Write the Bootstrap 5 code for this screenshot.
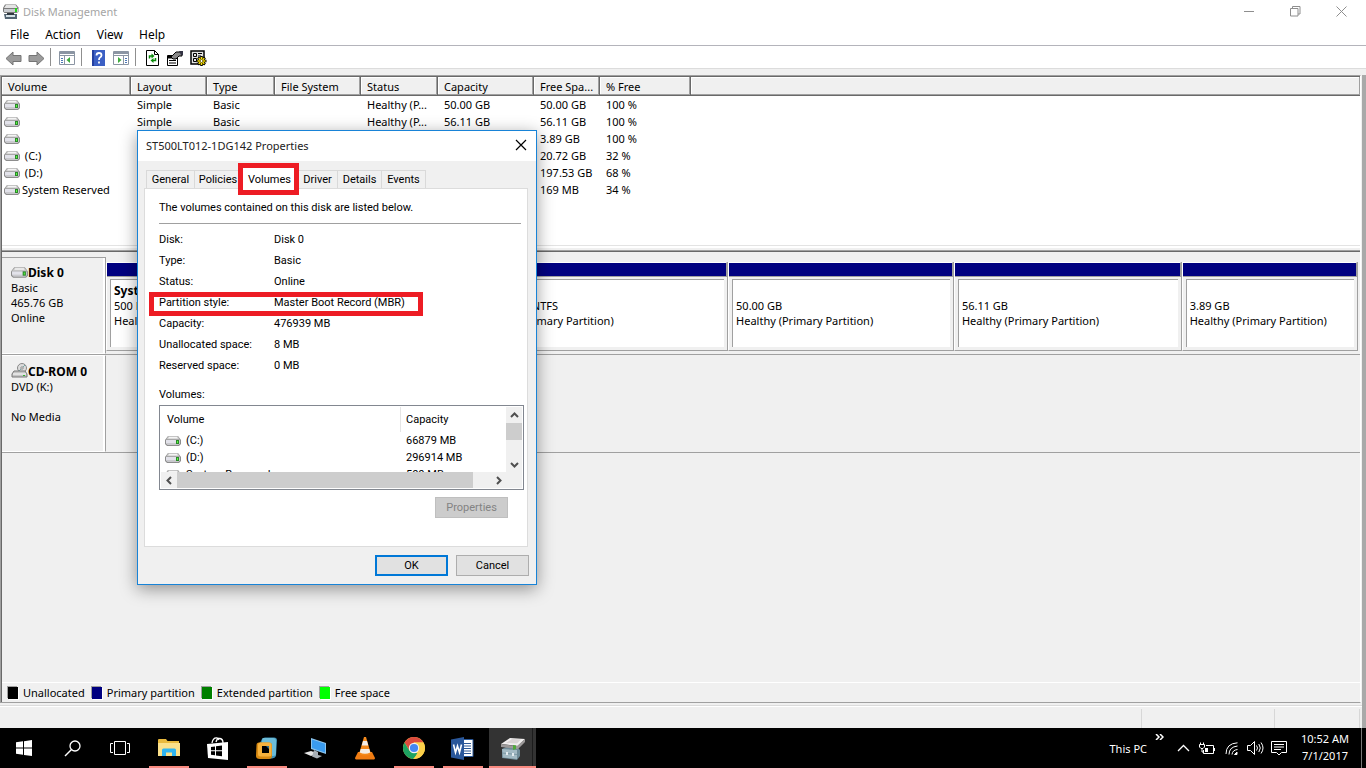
<!DOCTYPE html>
<html lang="en">
<head>
<meta charset="utf-8">
<meta name="viewport" content="width=device-width, initial-scale=1">
<title>Disk Management</title>
<link rel="stylesheet" href="https://cdn.jsdelivr.net/npm/bootstrap@5.3.0/dist/css/bootstrap.min.css">
<style>
body{font:11px/15px "Noto Sans","Open Sans",sans-serif;color:#000;background:#fff;min-height:100vh}
svg{display:block;flex:none}
button{font:inherit;padding:0;border:0;background:none;color:inherit}
.titlebar{height:23px;padding-left:3px;color:#a5a5a5}
.caption{margin-right:2px}
.caption button{width:46px;height:21px;color:#8e8e8e;display:grid;place-items:center}
.menus{height:23px;border-bottom:1px solid #b4b4bb;font-size:12px;padding-left:2px}
.menus button{padding:0 8px}
.tools{height:23px;border-bottom:1px solid #dcdcdc;padding:2px 4px 0}
.tools button{width:18px;height:18px;display:grid;place-items:center;margin-right:5px}
.tools .vr{background:#8f8f8f;opacity:1;height:18px;margin-right:7px}
.gutter{height:6px;background:#f0f0f0}
.client{background:#f0f0f0;border-right:4px solid #a9a9a9}
.frame{border-left:1px solid #a0a0a0;border-top:1px solid #a0a0a0;border-bottom:1px solid #a0a0a0;box-shadow:inset 1px 1px #696969;padding:1px 0 0 1px;margin-right:1px;border-right:1px solid #fff}
.listpane{background:#fff;min-height:168px}
.vols{width:100%;table-layout:fixed;border-collapse:separate;border-spacing:0}
.vols th{height:19px;font-weight:400;background:#f0f0f0;padding:2px 0 1px 6px;border-right:1px solid #696969;border-bottom:1px solid #696969;box-shadow:inset -1px -1px #a0a0a0,inset 1px 1px #fff;white-space:nowrap;overflow:hidden}
.vols th:last-child{border-right:0}
.vols td{height:17px;padding:0 0 0 6px;line-height:17px;white-space:nowrap;overflow:hidden;text-overflow:ellipsis}
.vols td:first-child{padding-left:2px}
.vols svg{margin-right:2px}
.splitter{height:7px;background:#f0f0f0;border-top:1px solid #e3e3e3;border-bottom:1px solid #696969;box-shadow:inset 0 -1px #a0a0a0,inset 0 2px #fff}
.disks{padding-top:5px}
.diskrow{min-height:98px;border-bottom:1px solid #a0a0a0}
.disklabel{width:104px;flex:none;padding:7px 9px;border-right:1px solid #a0a0a0;border-top:1px solid #a0a0a0;border-bottom:1px solid #fff;box-shadow:inset -2px 0 #fff}
.diskrow + .diskrow .disklabel{border-top-color:#fff}
.disklabel strong,.part strong{font-size:12px}
.parts{min-width:0;margin-right:2px}
.part{border-left:1px solid #fff;border-right:1px solid #a0a0a0;border-bottom:1px solid #a0a0a0;min-width:0;margin:5px 0 3px}
.part .stripe{height:15px;background:#000080;border-top:1px solid #fff;border-bottom:1px solid #a0a0a0;border-right:1px solid #a0a0a0}
.part .inside{flex:1;margin:2px 3px 3px;padding:3px 0 0 3px;background:#fff;border-left:1px solid #a0a0a0;border-top:1px solid #a0a0a0;white-space:nowrap;overflow:hidden}
.legend{height:20px;border-top:1px solid #fff;padding-left:6px}
.swatch{width:10px;height:12px;margin-right:5px;box-shadow:-1px -1px #a0a0a0,1px 1px #fff}
.legend span{margin-right:7px}
.statusbar{height:23px;margin-top:2px;border-top:1px solid #dcdcdc;box-shadow:inset 0 1px #fff}
.statusbar div{border-right:1px solid #d7d7d7;margin-top:3px}
.s2{width:133px}.s3{width:85px;margin-right:2px}
/* properties window */
.props{position:absolute;left:137px;top:130px;width:400px;background:#f0f0f0;border:1px solid #1883d7;box-shadow:0 4px 16px rgba(0,0,0,.4);font-family:Roboto,sans-serif}
.props header{height:30px;background:#fff;padding:0 9px 2px 8px;font-family:"Noto Sans",sans-serif;color:#222}
.tabs{height:27px;padding-left:8px;position:relative;z-index:1}
.tabs button{height:18px;border:1px solid #d9d9d9;border-bottom:0;border-left:0}
.tabs button:first-child{border-left:1px solid #d9d9d9}
.tabs .current{height:21px;margin-bottom:-1px;background:#fff;position:relative;border-color:#fff}
.w49{width:49px}.w47{width:47px}.w56{width:56px}.w40{width:40px}.w44{width:44px}
.callout::after{content:"";position:absolute;border:5px solid #ed1c24;pointer-events:none}
.tabs .callout::after{inset:-6px -2px -6px -4px}
.sheet{margin:0 8px 0 6px;padding:11px 3px 28px 14px;background:#fff;border:1px solid #dcdcdc}
.intro{margin:0 3px 5px 0;padding-bottom:8px;border-bottom:1px solid #a0a0a0}
.facts{margin:0 0 11px;line-height:21px}
.facts dt{width:115px;font-weight:400}
.facts dd{margin:0}
.facts .callout{position:relative}
.facts .callout::after{left:-10px;top:0;width:274px;height:24px}
.listbox{border:1px solid #828790;padding:1px;margin-top:3px;display:grid;grid-template:65px 16px/1fr 16px;background:#fff}
.clip{overflow:hidden}
.clip table{width:100%;table-layout:fixed;border-collapse:separate;border-spacing:0}
.clip th{height:25px;font-weight:400;padding:0 0 0 6px;border-right:1px solid #e5e5e5}
.clip th:last-child{border:0;padding-left:5px}
.clip td{line-height:17px;padding:0 0 0 4px}
.clip td:last-child{padding-left:5px}
.clip svg{margin-right:5px}
.bar{background:#f0f0f0}
.bar button{width:16px;height:16px;display:grid;place-items:center;color:#505050}
.thumb{background:#cdcdcd}
.v .thumb{height:17px}.h .thumb{width:296px}
.sheetbuttons{margin:7px 16px 0 0}
.pbtn{width:73px;height:21px;background:#e1e1e1;border:1px solid #adadad}
.pbtn:disabled{background:#ccc;border-color:#bfbfbf;color:#838383}
.pbtn.default{border:2px solid #0078d7}
.dlgbuttons{padding:8px 7px}
/* taskbar */
.taskbar{height:40px;background:#000;color:#fff}
.taskbar .sys{width:48px}.taskbar .app{width:49px}
.taskbar .sys,.taskbar .app{height:40px;display:grid;place-items:center}
.run{background:linear-gradient(#f98a80,#f98a80) 50% 100%/40px 2px no-repeat}
.active-app{background:linear-gradient(#f98a80,#f98a80) 0 100%/100% 2px no-repeat,linear-gradient(90deg,#333 43px,#1c1c1c 43px,#1c1c1c 44px,#333 44px);background-clip:padding-box;border-left:2px solid #000}
.tray button{height:40px;width:24px;display:grid;place-items:center}
.tray .more{height:18px}
.clock{width:60px;line-height:17px;margin-right:6px;padding-bottom:2px}
.edge{width:5px;border-left:1px solid #777}
</style>
</head>
<body class="d-flex flex-column position-relative overflow-hidden">
<svg width="0" height="0" class="position-absolute" aria-hidden="true">
  <symbol id="vol" viewBox="0 0 16 10"><path d="M3 0h10l3 4v4l-2 2H2L0 8V4z" fill="#8d8d8d"/><path d="M3.500 0h9l2.500 3.500H1z" fill="#c4c4c4"/><path d="M4 1h8l1 1.500H3z" fill="#f4f4f4"/><path d="M1 4h14v3.500L13.500 9h-11L1 7.500z" fill="#c9c9cd"/><path d="M1 4h10v3H1z" fill="#e2e2ea"/><rect x="11" y="4" width="3" height="4" fill="#2a8a28"/><rect x="12" y="5" width="1" height="2" fill="#5cf545"/></symbol>
</svg>

<div class="titlebar d-flex align-items-center justify-content-between">
  <div class="d-flex align-items-center gap-1">
    <svg width="16" height="16" viewBox="0 0 16 16"><path d="M2 0.500h11l2.500 3V8l-2 1H1.500L0 7.500V4z" fill="#7a7a7a"/><path d="M3 1h9.500l2 3H1z" fill="#e4e4e4"/><rect x="1" y="5" width="14" height="3" fill="#c9ccd0"/><rect x="12" y="4" width="2" height="4" fill="#25d51b"/><path d="M1 10h13v5H2z" fill="#536472"/><path d="M3 11h9v2H3z" fill="#d4e0e6"/><path d="M4 9h7v2H4z" fill="#30383f"/></svg>
    <span>Disk Management</span>
  </div>
  <div class="caption d-flex">
    <button aria-label="Minimize"><svg width="11" height="11"><path d="M0 5.500h10" stroke="currentColor"/></svg></button>
    <button aria-label="Restore"><svg width="11" height="11" fill="none" stroke="currentColor"><path d="M.5 2.500h7.500v7.500H.500zM2.500 2.500V.500H10v7.500H8"/></svg></button>
    <button aria-label="Close"><svg width="11" height="11"><path d="M.5.500l10 10M10.500.500l-10 10" stroke="currentColor"/></svg></button>
  </div>
</div>
<nav class="menus d-flex align-items-center" aria-label="Menu">
  <button>File</button><button>Action</button><button>View</button><button>Help</button>
</nav>
<div class="tools d-flex align-items-center" role="toolbar" aria-label="Tools">
  <button aria-label="Back"><svg width="17" height="15"><path d="M1 7.500L8 1v3.500h8v6H8V14z" fill="#9b9b9b" stroke="#747474"/></svg></button>
  <button aria-label="Forward"><svg width="17" height="15"><path d="M16 7.500L9 1v3.500H1v6h8V14z" fill="#9b9b9b" stroke="#747474"/></svg></button>
  <span class="vr"></span>
  <button aria-label="Show tree"><svg width="16" height="14"><path d="M.5.500h15v13H.500z" fill="#fff" stroke="#8b95a3"/><path d="M1 1h14v2H1zM1 4h14v1H1z" fill="#8b95a3"/><path d="M5.500 5v8" stroke="#8b95a3"/><path d="M2 7.500h2m-2 2h2m-2 2h2" stroke="#4c77b5"/><path d="M11 6v6L7.500 9z" fill="#3cab3c"/></svg></button>
  <span class="vr"></span>
  <button aria-label="Help"><svg width="13" height="16"><path d="M0 0h13v16H0z" fill="#3b5fc4"/><path d="M0 0h2v16H0z" fill="#2440a0"/><path d="M4.500 5.500q0-2.500 2.500-2.500t2.500 2.300q0 1.500-1.500 2.200-1 .5-1 2.500m0 1.500v2" fill="none" stroke="#fff" stroke-width="1.800"/></svg></button>
  <button aria-label="Show pane"><svg width="16" height="14"><path d="M.5.500h15v13H.500z" fill="#fff" stroke="#8b95a3"/><path d="M1 1h14v2H1zM1 4h14v1H1z" fill="#8b95a3"/><path d="M10.500 5v8" stroke="#8b95a3"/><path d="M12 7.500h2m-2 2h2m-2 2h2" stroke="#4c77b5"/><path d="M5 6v6l3.500-3z" fill="#3cab3c"/></svg></button>
  <span class="vr"></span>
  <button aria-label="Refresh"><svg width="13" height="16"><path d="M.5.500h8l4 4v11H.500z" fill="#fff" stroke="#000"/><path d="M8.500.500v4h4" fill="none" stroke="#000"/><path d="M3.500 8.500V6H6M9.500 8v2.500H7" fill="none" stroke="#0a8a0a" stroke-width="1.500"/><path d="M5.500 3.500v5L8.500 6zM7.500 8v5L4.500 10.500z" fill="#0a8a0a"/></svg></button>
  <button aria-label="Properties"><svg width="16" height="15"><path d="M.5 4.500h10v10H.500z" fill="#fff" stroke="#000"/><path d="M1 5h9v2H1zM2 9.500h7m-7 2.500h7" fill="#000" stroke="#000"/><path d="M4 6l5-5h6v4h-3L9 8H6z" fill="#888" stroke="#000"/><path d="M12 0h4v4h-2z" fill="#334"/></svg></button>
  <button aria-label="Settings"><svg width="17" height="16"><path d="M1 1h13v13H1z" fill="#e4e4e4" stroke="#000" stroke-width="1.500"/><path d="M3.500 3.500h3v3h-3zM3.500 8.500h3v3h-3zM8 3.500h4M8 6h3" fill="none" stroke="#000"/><path d="M11.500 6v10M6.500 11h10M8 7.500l7 7m0-7l-7 7" stroke="#000" stroke-width="2.500"/><path d="M11.500 7v8M7.500 11h8M8.700 8.200l5.600 5.600m0-5.600l-5.600 5.600" stroke="#ffe400" stroke-width="1.500"/><circle cx="11.500" cy="11" r="1.500" fill="#fff" stroke="#665b00"/></svg></button>
</div>
<div class="gutter"></div>

<div class="client flex-grow-1 d-flex flex-column">
 <main class="frame flex-grow-1 d-flex flex-column">
  <div class="listpane">
   <table class="vols">
    <colgroup><col style="width:129px"><col style="width:76px"><col style="width:68px"><col style="width:86px"><col style="width:77px"><col style="width:96px"><col style="width:66px"><col style="width:91px"><col></colgroup>
    <thead><tr><th>Volume</th><th>Layout</th><th>Type</th><th>File System</th><th>Status</th><th>Capacity</th><th>Free Spa...</th><th>% Free</th><th></th></tr></thead>
    <tbody>
    <tr><td><div class="d-flex align-items-center"><svg width="16" height="10"><use href="#vol"/></svg></div></td><td>Simple</td><td>Basic</td><td></td><td>Healthy (P...</td><td>50.00 GB</td><td>50.00 GB</td><td>100 %</td><td></td></tr>
    <tr><td><div class="d-flex align-items-center"><svg width="16" height="10"><use href="#vol"/></svg></div></td><td>Simple</td><td>Basic</td><td></td><td>Healthy (P...</td><td>56.11 GB</td><td>56.11 GB</td><td>100 %</td><td></td></tr>
    <tr><td><div class="d-flex align-items-center"><svg width="16" height="10"><use href="#vol"/></svg></div></td><td></td><td></td><td></td><td></td><td></td><td>3.89 GB</td><td>100 %</td><td></td></tr>
    <tr><td><div class="d-flex align-items-center"><svg width="16" height="10"><use href="#vol"/></svg>&nbsp;(C:)</div></td><td></td><td></td><td></td><td></td><td></td><td>20.72 GB</td><td>32 %</td><td></td></tr>
    <tr><td><div class="d-flex align-items-center"><svg width="16" height="10"><use href="#vol"/></svg>&nbsp;(D:)</div></td><td></td><td></td><td></td><td></td><td></td><td>197.53 GB</td><td>68 %</td><td></td></tr>
    <tr><td><div class="d-flex align-items-center"><svg width="16" height="10"><use href="#vol"/></svg>System Reserved</div></td><td></td><td></td><td></td><td></td><td></td><td>169 MB</td><td>34 %</td><td></td></tr>
    </tbody>
   </table>
  </div>
  <div class="splitter"></div>
  <section class="disks flex-grow-1">
   <div class="diskrow d-flex">
    <div class="disklabel">
     <div class="d-flex align-items-center"><svg width="17" height="11"><use href="#vol"/></svg><strong>Disk 0</strong></div>
     <div>Basic</div><div>465.76 GB</div><div>Online</div>
    </div>
    <div class="parts d-flex flex-fill">
     <div class="part d-flex flex-column" style="flex:136 1 0"><div class="stripe"></div><div class="inside"><strong>System</strong><div>500 MB</div><div>Healthy</div></div></div>
     <div class="part d-flex flex-column" style="flex:226 1 0"><div class="stripe"></div><div class="inside"></div></div>
     <div class="part d-flex flex-column" style="flex:260 1 0"><div class="stripe"></div><div class="inside"><strong>(D:)</strong><div>289.96 GB NTFS</div><div>Healthy (Primary Partition)</div></div></div>
     <div class="part d-flex flex-column" style="flex:226 1 0"><div class="stripe"></div><div class="inside"><br><div>50.00 GB</div><div>Healthy (Primary Partition)</div></div></div>
     <div class="part d-flex flex-column" style="flex:228 1 0"><div class="stripe"></div><div class="inside"><br><div>56.11 GB</div><div>Healthy (Primary Partition)</div></div></div>
     <div class="part d-flex flex-column" style="flex:176 1 0"><div class="stripe"></div><div class="inside"><br><div>3.89 GB</div><div>Healthy (Primary Partition)</div></div></div>
    </div>
   </div>
   <div class="diskrow d-flex">
    <div class="disklabel">
     <div class="d-flex align-items-center"><svg width="17" height="16" viewBox="0 0 17 16"><circle cx="11" cy="5" r="4.500" fill="#ddd" stroke="#888"/><path d="M11 5l3-3M11 5L8 8" stroke="#7aa"/><circle cx="11" cy="5" r="1.200" fill="#fff" stroke="#888"/><path d="M3 8h11l2 3v3H1v-3z" fill="#c4c4c4" stroke="#777"/><path d="M2 11h13" stroke="#fff"/><path d="M12 12h2v1h-2z" fill="#2fb52a"/></svg><strong>CD-ROM 0</strong></div>
     <div>DVD (K:)</div><br><div>No Media</div>
    </div>
   </div>
  </section>
  <div class="legend d-flex align-items-center">
   <i class="swatch" style="background:#000"></i><span>Unallocated</span>
   <i class="swatch" style="background:#000080"></i><span>Primary partition</span>
   <i class="swatch" style="background:#008000"></i><span>Extended partition</span>
   <i class="swatch" style="background:#00ff00"></i><span>Free space</span>
  </div>
 </main>
 <div class="statusbar d-flex"><div class="flex-fill"></div><div class="s2"></div><div class="s3"></div></div>
</div>

<footer class="taskbar d-flex align-items-stretch">
 <button class="sys" aria-label="Start"><svg width="16" height="16" fill="#fff"><path d="M0 2.300L7 1.300V7.600H0zM8 1.200L16 0v7.600H8zM0 8.500h7v6.300L0 13.800zM8 8.500h8V16L8 14.900z"/></svg></button>
 <button class="sys" aria-label="Search"><svg width="17" height="17" fill="none" stroke="#fff"><circle cx="11" cy="6" r="5" stroke-width="1.300"/><path d="M7.500 9.500L1 16" stroke-width="1.500"/></svg></button>
 <button class="sys" aria-label="Task view"><svg width="20" height="14" fill="none" stroke="#fff"><path d="M4.500.500h11v13h-11zM3 2.500H.500v9H3M17 2.500h2.500v9H17"/></svg></button>
 <button class="app run" aria-label="File Explorer"><svg width="22" height="18"><path d="M0 1q0-1 1-1h7l1.500 2H21v15H0z" fill="#e9b93d"/><path d="M0 4h22v13H0z" fill="#fbe08a"/><path d="M4 17v-6q0-1.500 1.500-1.500h11q1.500 0 1.500 1.500v6h-4v-3.500H8V17z" fill="#2fb4f0"/></svg></button>
 <button class="app" aria-label="Store"><svg width="22" height="23"><path d="M5 6q1-5.500 5-5 1.500 0 2 2M9 5q1-4 4-3.500T16 6" fill="none" stroke="#fff" stroke-width="1.300"/><path d="M0 7l21-2v18L1 21z" fill="#fff"/><path d="M4 10l4-.5v3.800H4zM9 9.300l6-.7v4.700H9zM4 14.300h4v3.900l-4-.5zM9 14.300h6v4.900l-6-.8z" fill="#000"/></svg></button>
 <button class="app run" aria-label="VMware"><svg width="21" height="22"><path d="M6 2q1-1.500 3-1.500h9q3 0 3 3L20 19q-1 2-4 2.500H5L3 8z" fill="#3d90b5"/><path d="M7 1h10q3 0 3 3v12q0 3-3 3H6V4q0-3 1-3z" fill="#6cbcd8"/><path d="M3 5.500h10q3 0 3 3V19q0 3-3 3H4q-4 0-4-3L.5 8q0-2.500 2.500-2.500z" fill="#d98a12"/><path d="M4 5.500h9q2.500 0 2.500 2.500v9q0 2.500-2.500 2.500H4.500Q2 19.500 2 17V8q0-2.500 2-2.500z" fill="#f7b23c"/><path d="M6 9h7v7H6z" fill="#000"/><path d="M10 9h3v3z" fill="#2c6d8c"/></svg></button>
 <button class="app" aria-label="Remote desktop"><svg width="23" height="21"><path d="M7 0l15 5v11L7 11z" fill="#8ec4ea"/><path d="M8 1.500l13 4.300v8.800L8 10z" fill="#3a9cf0"/><path d="M0 15l7-2 7 2.500L7 18z" fill="#e6e6e6"/><path d="M10 12l4 2v3l4 1-5 2.500-5-2z" fill="#a9b0b6"/></svg></button>
 <button class="app" aria-label="VLC"><svg width="20" height="23"><path d="M3 15h14l3 6q0 1-1 1.500H1Q0 22 0 21z" fill="#f07c12"/><path d="M9 0h2l5 17q-6 3-12 0z" fill="#f58a1c"/><path d="M8 4h4l1.300 4.500H6.700zM5.700 12h8.600l1 3.500q-5.300 2.500-10.600 0z" fill="#f4eee8"/></svg></button>
 <button class="app run" aria-label="Chrome"><svg width="22" height="22" viewBox="0 0 22 22"><circle cx="11" cy="11" r="11" fill="#fcd04a"/><path d="M1.500 5.500A11 11 0 0 1 20.500 5.500H11L6.500 13.500z" fill="#dd4b3e"/><path d="M1.500 5.500L6.500 13.800 11 16l-1.800 5.900A11 11 0 0 1 1.500 5.500z" fill="#1da261"/><path d="M6.500 13.800L11 16h4.700L10 22l-1-.1z" fill="#1da261"/><path d="M15.700 13.500L11 22A11 11 0 0 0 20.500 5.500H11z" fill="#fcd04a"/><circle cx="11" cy="11" r="5.200" fill="#f2f2f2"/><circle cx="11" cy="11" r="4.100" fill="#4587f3"/></svg></button>
 <button class="app run" aria-label="Word"><svg width="23" height="23"><path d="M11 2.500h11v17H11z" fill="#fff" stroke="#2b5796"/><path d="M13 6.500h7M13 9h7M13 11.500h7M13 14h7M13 16.500h7" stroke="#2b5796"/><path d="M0 2.500L13 0v23L0 20.500z" fill="#2a579a"/><path d="M2.500 7.500l2 8L6.500 9l2 6.500 2-8" fill="none" stroke="#fff" stroke-width="1.600"/></svg></button>
 <button class="app active-app" aria-label="Disk Management"><svg width="24" height="23"><path d="M1 12l4-2h11l3 3v6l-3 4-15-2z" fill="#6f8b98"/><path d="M1 12l15 1v9L2 20.500z" fill="#a3bac4"/><path d="M1 16l15 1.500" stroke="#7d98a4"/><path d="M5 15h2v3H5zM11 16h2v3h-2z" fill="#e3ebef"/><path d="M0 7l9-6 15 1-7 7z" fill="#f1efef"/><path d="M5 6l6-4 9 .5-4 4z" fill="#d9d4d4"/><path d="M0 7l16 2 8-7v3l-7 7L0 10z" fill="#9d9a9a"/><path d="M12 8l3 .5V12l-3 1z" fill="#4fa83a"/></svg></button>
 <div class="tray d-flex align-items-center ms-auto">
  <span>This PC</span>
  <button aria-label="More" class="more align-self-start"><svg width="9" height="6" fill="none" stroke="#fff" stroke-width="1.500"><path d="M1 0l3 3-3 3M5 0l3 3-3 3"/></svg></button>
  <button aria-label="Hidden icons"><svg width="13" height="8"><path d="M1 7l5.500-5.500L12 7" fill="none" stroke="#fff" stroke-width="1.300"/></svg></button>
  <button aria-label="Battery"><svg width="16" height="13" fill="none" stroke="#fff"><path d="M7 3.500h7.500v8h-10V8M15.500 6v3M1.500.500v2M4.500.500v2M.5 2.500h5V5L4 6.500H2L.500 5zM3 6.500V10h2"/><path d="M6 6h3v4H6z" fill="#fff" stroke="none"/></svg></button>
  <button aria-label="Network"><svg width="13" height="13" fill="none" stroke="#fff"><path d="M1 12Q1 1.500 12.500.800M4 12.500Q4 5 12.500 4M7 12.500Q7.500 8 12.500 7.500"/><path d="M12 10v2.500h-2.500z" fill="#fff"/></svg></button>
  <button aria-label="Volume"><svg width="17" height="14" fill="none" stroke="#fff"><path d="M.5 4.500h3l4-4v13l-4-4h-3zM9.500 4.500q2 2.500 0 5M11.800 3q3 4 0 8M14 1.500q4 5.500 0 11"/></svg></button>
  <button aria-label="Notifications"><svg width="16" height="15" fill="none" stroke="#fff"><path d="M.5.500h15v11h-5L8 14l-2.500-2.500h-5zM3 3.500h10M3 6h10M3 8.500h7"/></svg></button>
  <div class="clock text-center ms-1">10:52 AM<br>7/1/2017</div>
  <div class="edge align-self-stretch"></div>
 </div>
</footer>

<div class="props" role="dialog" aria-label="Disk properties">
 <header class="d-flex align-items-center justify-content-between"><span>ST500LT012-1DG142 Properties</span><button aria-label="Close"><svg width="12" height="12"><path d="M1 1l10 10M11 1L1 11" stroke="#000" stroke-width="1.200"/></svg></button></header>
 <div class="tabs d-flex align-items-end" role="tablist">
  <button role="tab" class="w49">General</button><button role="tab" class="w47">Policies</button><button role="tab" class="current callout w56">Volumes</button><button role="tab" class="w40">Driver</button><button role="tab" class="w44">Details</button><button role="tab" class="w44">Events</button>
 </div>
 <div class="sheet">
  <p class="intro">The volumes contained on this disk are listed below.</p>
  <dl class="facts">
   <div class="d-flex"><dt>Disk:</dt><dd>Disk 0</dd></div>
   <div class="d-flex"><dt>Type:</dt><dd>Basic</dd></div>
   <div class="d-flex"><dt>Status:</dt><dd>Online</dd></div>
   <div class="d-flex callout"><dt>Partition style:</dt><dd>Master Boot Record (MBR)</dd></div>
   <div class="d-flex"><dt>Capacity:</dt><dd>476939 MB</dd></div>
   <div class="d-flex"><dt>Unallocated space:</dt><dd>8 MB</dd></div>
   <div class="d-flex"><dt>Reserved space:</dt><dd>0 MB</dd></div>
  </dl>
  <div>Volumes:</div>
  <div class="listbox">
   <div class="clip"><table>
    <colgroup><col style="width:240px"><col></colgroup>
    <thead><tr><th>Volume</th><th>Capacity</th></tr></thead>
    <tbody>
    <tr><td><div class="d-flex align-items-center"><svg width="16" height="10"><use href="#vol"/></svg>(C:)</div></td><td>66879 MB</td></tr>
    <tr><td><div class="d-flex align-items-center"><svg width="16" height="10"><use href="#vol"/></svg>(D:)</div></td><td>296914 MB</td></tr>
    <tr><td><div class="d-flex align-items-center"><svg width="16" height="10"><use href="#vol"/></svg>System Reserved</div></td><td>500 MB</td></tr>
    </tbody></table></div>
   <div class="bar v d-flex flex-column"><button aria-label="Scroll up"><svg width="9" height="9"><path d="M1 6l3.500-3.500L8 6" fill="none" stroke="currentColor" stroke-width="2"/></svg></button><div class="thumb"></div><button class="mt-auto" aria-label="Scroll down"><svg width="9" height="9"><path d="M1 3l3.500 3.500L8 3" fill="none" stroke="currentColor" stroke-width="2"/></svg></button></div>
   <div class="bar h d-flex"><button aria-label="Scroll left"><svg width="9" height="9"><path d="M6 1L2.500 4.500 6 8" fill="none" stroke="currentColor" stroke-width="2"/></svg></button><div class="thumb"></div><button class="ms-auto" aria-label="Scroll right"><svg width="9" height="9"><path d="M3 1l3.500 3.500L3 8" fill="none" stroke="currentColor" stroke-width="2"/></svg></button></div>
   <div class="bar"></div>
  </div>
  <div class="sheetbuttons d-flex justify-content-end"><button class="pbtn" disabled>Properties</button></div>
 </div>
 <div class="dlgbuttons d-flex justify-content-end gap-2"><button class="pbtn default">OK</button><button class="pbtn">Cancel</button></div>
</div>
<script src="https://cdn.jsdelivr.net/npm/bootstrap@5.3.0/dist/js/bootstrap.bundle.min.js"></script>
</body>
</html>
